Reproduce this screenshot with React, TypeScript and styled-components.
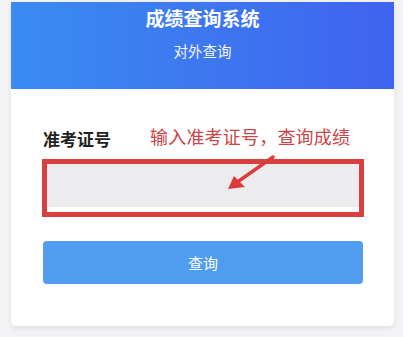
import React from "react";
import styled, { createGlobalStyle } from "styled-components";

const GlobalStyle = createGlobalStyle`
  html, body {
    margin: 0;
    padding: 0;
    background: #f3f3f5;
    font-family: "Noto Sans CJK SC", "Noto Sans", sans-serif;
  }
`;

const App = () => {
  return (
    <>
      <GlobalStyle />
      <Page>
        <Card>
          <Header>
            <Title>成绩查询系统</Title>
            <Subtitle>对外查询</Subtitle>
          </Header>
          <Form>
            <LabelRow>
              <Label>准考证号</Label>
              <Hint>输入准考证号，查询成绩</Hint>
            </LabelRow>
            <Frame>
              <Input />
            </Frame>
            <Button>查询</Button>
            <Arrow width="60" height="45" viewBox="0 0 60 45">
              <line x1="51" y1="3" x2="14" y2="29" stroke="#dc3b3b" strokeWidth="3.5" strokeLinecap="round" />
              <polygon points="6,35 12,22 23,33" fill="#dc3b3b" />
            </Arrow>
          </Form>
        </Card>
      </Page>
    </>
  );
};

export default App;

const Page = styled.div`
  width: 403px;
  height: 337px;
  padding: 2px 9px 0 11px;
  box-sizing: border-box;
`;

const Card = styled.div`
  height: 324px;
  background: #fff;
  border-radius: 0 0 5px 5px;
  box-shadow: 0 2px 6px rgba(0, 0, 0, 0.08);
  overflow: hidden;
`;

const Header = styled.div`
  height: 87px;
  background: linear-gradient(90deg, #3a8cf1 0%, #3e6df0 75%, #4063ef 100%);
  color: #fff;
  display: flex;
  flex-direction: column;
  align-items: center;
`;

const Title = styled.div`
  font-size: 19px;
  font-weight: 700;
  line-height: 26px;
  margin-top: 3px;
`;

const Subtitle = styled.div`
  font-size: 14.5px;
  line-height: 20px;
  margin-top: 10px;
  color: #f2f5ff;
`;

const Form = styled.div`
  position: relative;
  padding: 32px 30px 0 31px;
`;

const LabelRow = styled.div`
  display: flex;
  align-items: center;
  height: 30px;
  padding-left: 1px;
`;

const Label = styled.div`
  font-size: 17px;
  font-weight: 700;
  color: #222;
  width: 107px;
  margin-top: 4px;
`;

const Hint = styled.div`
  font-size: 18px;
  color: #c94447;
  letter-spacing: 0.2px;
`;

const Frame = styled.div`
  margin-top: 8px;
  border: 5px solid #d8403f;
  padding-bottom: 5px;
  width: 312px;
`;

const Input = styled.div`
  height: 43px;
  background: #ececef;
`;

const Button = styled.div`
  margin: 24px 0 0 1px;
  width: 320px;
  height: 43px;
  border-radius: 4px;
  background: #4f9cf1;
  color: #fff;
  font-size: 15px;
  display: flex;
  align-items: center;
  justify-content: center;
`;

const Arrow = styled.svg`
  position: absolute;
  left: 211px;
  top: 65px;
`;
